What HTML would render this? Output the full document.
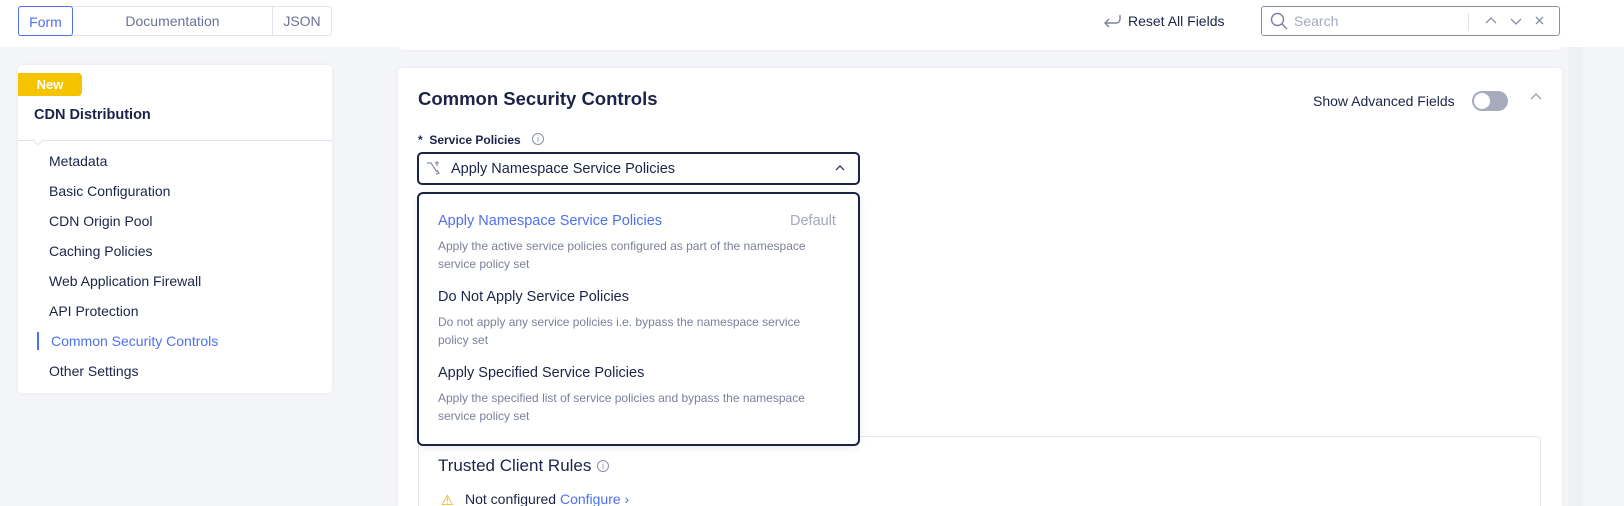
<!DOCTYPE html>
<html style="width:1624px;height:506px;overflow:hidden"><head><meta charset="utf-8"><style>
*{box-sizing:border-box;margin:0;padding:0}
body{width:1624px;height:506px;overflow:hidden;background:#f4f5f8;font-family:"Liberation Sans",sans-serif;color:#1b2447;position:relative}
.abs{position:absolute}
.top{left:0;top:0;width:1624px;height:47px;background:#fff}
.tabs{left:18px;top:6px;width:314px;height:30px;border:1px solid #e3e5ec;border-radius:3px;font-size:14px;color:#6b7393}
.tabs div{position:absolute;top:0;height:28px;line-height:28px;text-align:center}
.card{background:#fff;border-radius:4px;box-shadow:0 0 3px rgba(0,0,0,.06)}
.nav{left:49px;font-size:14px;color:#1b2447}
.dd-t{left:438px;font-size:14.5px}
.dd-d{left:438px;font-size:12px;color:#7b8199;line-height:18px;width:385px}
</style></head><body>
<div class="abs card" style="left:398px;top:20px;width:1164px;height:30px"></div>
<div class="abs top"></div>
<div class="abs tabs">
 <div style="left:-1px;top:-1px;width:55px;height:30px;line-height:30px;border:1px solid #4f6ff0;border-radius:3px;color:#4f6ff0">Form</div>
 <div style="left:54px;width:200px;border-right:1px solid #e3e5ec">Documentation</div>
 <div style="left:254px;width:58px">JSON</div>
</div>
<svg class="abs" style="left:1102px;top:13px" width="20" height="16" viewBox="0 0 20 16"><path d="M18 2v4a4 4 0 0 1-4 4H3M7 6l-4 4 4 4" fill="none" stroke="#7b8199" stroke-width="1.4"/></svg>
<div class="abs" style="left:1128px;top:13px;font-size:14px">Reset All Fields</div>
<div class="abs" style="left:1261px;top:6px;width:299px;height:30px;border:1px solid #8a90a8;border-radius:3px;background:#fff"></div>
<svg class="abs" style="left:1270px;top:12px" width="18" height="18" viewBox="0 0 18 18"><circle cx="7.5" cy="7.5" r="6" fill="none" stroke="#7b8199" stroke-width="1.4"/><path d="M12 12l5 5" stroke="#7b8199" stroke-width="1.4"/></svg>
<div class="abs" style="left:1294px;top:13px;font-size:14px;color:#a4a9bd">Search</div>
<div class="abs" style="left:1468px;top:13px;width:1px;height:17px;background:#e0e2e8"></div>
<svg class="abs" style="left:1484px;top:14px" width="70" height="14" viewBox="0 0 70 14"><path d="M2 9l5-5 5 5M27 5l5 5 5-5M52 3l7 7M59 3l-7 7" fill="none" stroke="#8a90a8" stroke-width="1.3"/></svg>
<div class="abs" style="left:1568px;top:47px;width:14px;height:459px;background:#eef0f3"></div>

<div class="abs card" style="left:18px;top:65px;width:314px;height:328px"></div>
<div class="abs" style="left:18px;top:73px;width:64px;height:23px;background:#f5c400;border-radius:0 4px 4px 0;color:#fff;font-weight:bold;font-size:13px;text-align:center;line-height:23px">New</div>
<div class="abs" style="left:34px;top:107px;font-weight:bold;font-size:14.5px">CDN Distribution</div>
<div class="abs" style="left:18px;top:140px;width:314px;height:1px;background:#dfe2e8"></div>
<div class="abs" style="left:34px;top:136px;width:8px;height:8px;background:#fff;border-right:1px solid #dfe2e8;border-bottom:1px solid #dfe2e8;transform:rotate(45deg)"></div>
<div class="abs nav" style="top:153px">Metadata</div>
<div class="abs nav" style="top:183px">Basic Configuration</div>
<div class="abs nav" style="top:213px">CDN Origin Pool</div>
<div class="abs nav" style="top:243px">Caching Policies</div>
<div class="abs nav" style="top:273px">Web Application Firewall</div>
<div class="abs nav" style="top:303px">API Protection</div>
<div class="abs" style="left:37px;top:332px;width:2px;height:18px;background:#4f6ff0"></div>
<div class="abs nav" style="top:333px;left:51px;color:#4f6ff0">Common Security Controls</div>
<div class="abs nav" style="top:363px">Other Settings</div>

<div class="abs" style="left:398px;top:68px;width:1164px;height:438px;background:#fff;border-radius:4px 4px 0 0;box-shadow:0 0 3px rgba(0,0,0,.06)"></div>
<div class="abs" style="left:418px;top:88px;font-weight:bold;font-size:18.5px">Common Security Controls</div>
<div class="abs" style="left:1313px;top:93px;font-size:14px">Show Advanced Fields</div>
<div class="abs" style="left:1472px;top:91px;width:36px;height:20px;border-radius:10px;background:#a6abbd"></div>
<div class="abs" style="left:1474px;top:93px;width:16px;height:16px;border-radius:8px;background:#fff"></div>
<svg class="abs" style="left:1529px;top:92px" width="14" height="10" viewBox="0 0 14 10"><path d="M2 7l5-5 5 5" fill="none" stroke="#8a90a8" stroke-width="1.2"/></svg>
<div class="abs" style="left:418px;top:133px;font-size:12px;font-weight:bold">* &nbsp;Service Policies</div>
<div class="abs" style="left:532px;top:133px;width:12px;height:12px;border:1px solid #8a90a8;border-radius:50%;font-size:9px;color:#8a90a8;text-align:center;line-height:10px">i</div>
<div class="abs" style="left:417px;top:152px;width:443px;height:33px;border:2px solid #1b2447;border-radius:5px;background:#fff"></div>
<svg class="abs" style="left:426px;top:160px" width="16" height="16" viewBox="0 0 16 16"><path d="M1 3h4l6 9M9 3h4M11 1v5M11 10l2 3-3 1" fill="none" stroke="#8a90a8" stroke-width="1.2"/></svg>
<div class="abs" style="left:451px;top:161px;font-size:14.5px">Apply Namespace Service Policies</div>
<svg class="abs" style="left:834px;top:164px" width="12" height="8" viewBox="0 0 12 8"><path d="M2 6l4-4 4 4" fill="none" stroke="#1b2447" stroke-width="1.2"/></svg>

<div class="abs" style="left:418px;top:436px;width:1123px;height:70px;border:1px solid #e6e8ee;border-bottom:none;border-radius:4px 4px 0 0;background:#fff"></div>
<div class="abs" style="left:438px;top:456px;font-size:17px">Trusted Client Rules</div>
<div class="abs" style="left:597px;top:460px;width:12px;height:12px;border:1px solid #8a90a8;border-radius:50%;font-size:9px;color:#8a90a8;text-align:center;line-height:10px">i</div>
<div class="abs" style="left:441px;top:492px;font-size:14px;color:#e8a700">⚠</div>
<div class="abs" style="left:465px;top:491px;font-size:14px">Not configured <span style="color:#4f6ff0">Configure</span> <span style="color:#4f6ff0">›</span></div>

<div class="abs" style="left:417px;top:192px;width:443px;height:254px;border:2px solid #1b2447;border-radius:6px;background:#fff;box-shadow:0 2px 8px rgba(0,0,0,.08)"></div>
<div class="abs dd-t" style="top:213px;color:#4f6ff0">Apply Namespace Service Policies</div>
<div class="abs" style="left:790px;top:213px;font-size:14.5px;color:#a4a9bd">Default</div>
<div class="abs dd-d" style="top:237px">Apply the active service policies configured as part of the namespace service policy set</div>
<div class="abs dd-t" style="top:289px">Do Not Apply Service Policies</div>
<div class="abs dd-d" style="top:313px">Do not apply any service policies i.e. bypass the namespace service policy set</div>
<div class="abs dd-t" style="top:365px">Apply Specified Service Policies</div>
<div class="abs dd-d" style="top:389px">Apply the specified list of service policies and bypass the namespace service policy set</div>
</body></html>
